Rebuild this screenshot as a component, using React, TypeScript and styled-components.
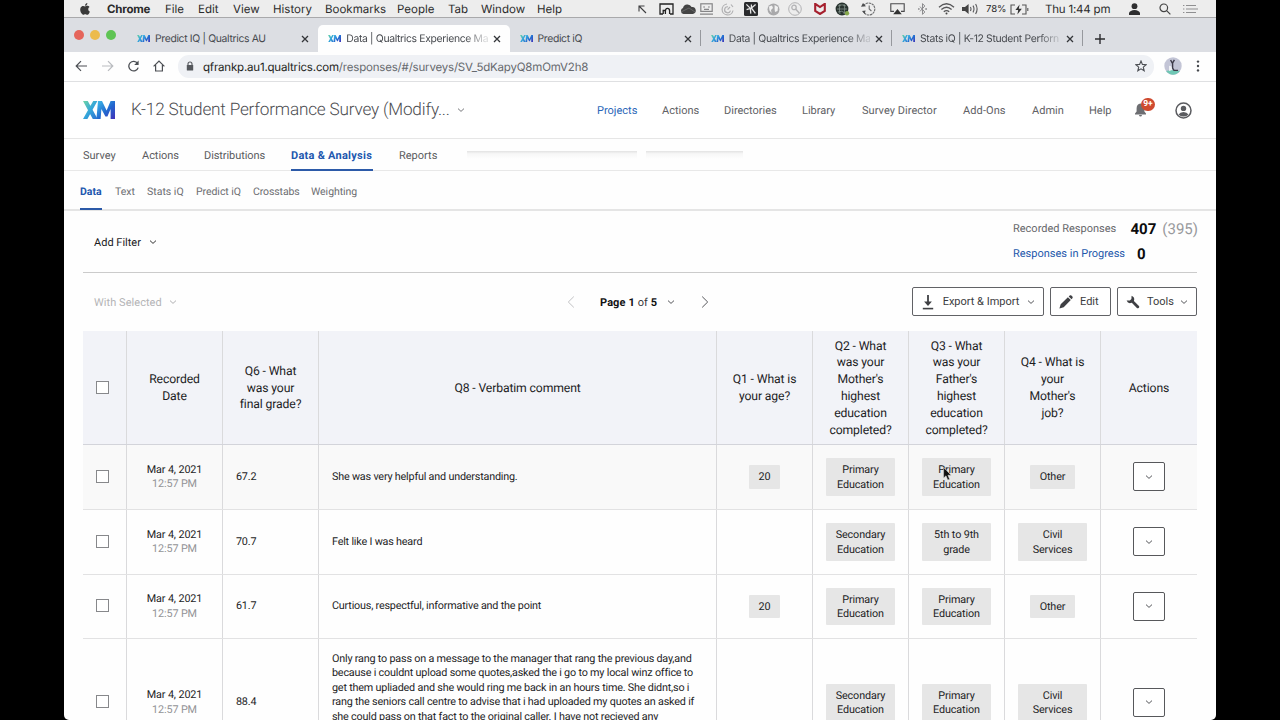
import React from "react";
import styled, { createGlobalStyle, css } from "styled-components";

const Global = createGlobalStyle`
  * { box-sizing: border-box; }
  html, body { margin: 0; padding: 0; background: #000; overflow: hidden; }
  body { font-family: Roboto, "Liberation Sans", sans-serif; text-rendering: geometricPrecision; }
  svg { display: block; flex: none; }
`;

/* ---------- window shell ---------- */

const Desktop = styled.div`
  width: 1280px;
  height: 720px;
  display: flex;
  justify-content: center;
  background: #000;
`;

const Screen = styled.div`
  width: 1152px;
  height: 720px;
  display: flex;
  flex-direction: column;
  overflow: hidden;
  background: #fefefe;
  border-radius: 0 0 5px 5px;
`;

const Label = styled.span<{ $w?: number; $ls?: number }>`
  flex: none;
  white-space: nowrap;
  width: ${(p) => (p.$w ? `${p.$w}px` : "auto")};
  letter-spacing: ${(p) => p.$ls ?? 0}px;
`;

/* ---------- macOS menu bar ---------- */

const MenuBar = styled.header`
  height: 18px;
  flex: none;
  display: flex;
  align-items: center;
  padding: 1px 17px 0 15px;
  background: #ededed;
  border-bottom: 1px solid #a9a9ab;
  font: 11.5px/17px Inter, sans-serif;
  color: #2b2b2b;
`;

const MenuItems = styled.nav`
  display: flex;
  gap: 16px;
  margin-left: 15px;
`;

const MenuItem = styled(Label)<{ $bold?: boolean }>`
  font-weight: ${(p) => (p.$bold ? 700 : 400)};
`;

const Tray = styled.div`
  display: flex;
  align-items: center;
  margin-left: auto;
  height: 17px;
`;

const TraySlot = styled.span<{ $w: number }>`
  width: ${(p) => p.$w}px;
  flex: none;
  display: flex;
  justify-content: center;
`;

const Battery = styled(Label)`
  font-size: 9.6px;
`;

/* ---------- browser tab strip ---------- */

const TabStrip = styled.div`
  height: 34px;
  flex: none;
  display: flex;
  align-items: flex-end;
  background: #dcdee3;
  padding-left: 10px;
`;

const Lights = styled.div`
  display: flex;
  gap: 6px;
  width: 53px;
  height: 34px;
  align-items: center;
`;

const Light = styled.i<{ $c: string }>`
  width: 10px;
  height: 10px;
  border-radius: 50%;
  background: ${(p) => p.$c};
`;

const BrowserTab = styled.div<{ $active?: boolean; $sep?: boolean }>`
  position: relative;
  width: 191.25px;
  height: 27px;
  flex: none;
  display: flex;
  align-items: center;
  padding: 0 9px 0 10px;
  font: 10.4px/14px Inter, sans-serif;
  letter-spacing: -0.34px;
  color: #474a4f;
  ${(p) =>
    p.$active &&
    css`
      background: #fefefe;
      border-radius: 5px 5px 0 0;
    `}
  ${(p) =>
    p.$sep &&
    css`
      &::after {
        content: "";
        position: absolute;
        right: 0;
        top: 5px;
        width: 1px;
        height: 16px;
        background: #96989d;
      }
    `}
`;

const TabTitle = styled.span<{ $fade?: boolean }>`
  flex: 1 0 0;
  min-width: 0;
  margin: 0 5px 0 5px;
  white-space: nowrap;
  ${(p) =>
    p.$fade &&
    css`
      mask-image: linear-gradient(to right, #000 84%, rgba(0, 0, 0, 0.2) 98%);
    `}
`;

const NewTab = styled.div`
  width: 34px;
  height: 27px;
  display: flex;
  align-items: center;
  justify-content: center;
`;

/* ---------- address bar ---------- */

const AddressRow = styled.div`
  height: 30px;
  flex: none;
  display: flex;
  align-items: center;
  border-bottom: 1px solid #dfe0e2;
  padding: 0 11px 1px 11px;
`;

const NavButtons = styled.div`
  display: flex;
  gap: 13px;
  width: 103px;
  align-items: center;
`;

const Address = styled.div`
  width: 976px;
  height: 23px;
  display: flex;
  align-items: center;
  padding: 0 7px 0 8px;
  border-radius: 11px;
  background: #eff1f5;
  font: 11.5px/16px Inter, sans-serif;
  color: #66696e;
`;

const Url = styled.span`
  flex: 1;
  margin-left: 9px;
  padding-top: 1px;
  letter-spacing: -0.19px;
  white-space: nowrap;
  b {
    font-weight: 400;
    color: #1c1d20;
  }
`;

const Avatar = styled.div`
  margin-left: 10px;
`;

const Kebab = styled.div`
  margin-left: auto;
`;

/* ---------- application header ---------- */

const AppHeader = styled.header`
  height: 57px;
  flex: none;
  display: flex;
  align-items: center;
  border-bottom: 1px solid #e6e6e6;
  padding: 0 24px 0 19px;
  background: #fff;
`;

const ProjectTitle = styled.h1`
  margin: 0 7px 1px 16px;
  width: 319px;
  font-size: 17.2px;
  font-weight: 300;
  line-height: 24px;
  color: #4c4d51;
  letter-spacing: -0.2px;
  white-space: nowrap;
`;

const GlobalNav = styled.nav`
  display: flex;
  gap: 26px;
  margin-left: auto;
  padding-top: 1px;
  font-size: 11px;
  line-height: 16px;
  color: #606165;
`;

const GlobalItem = styled(Label)<{ $active?: boolean }>`
  color: ${(p) => (p.$active ? "#2a66b8" : "inherit")};
`;

const Bell = styled.div`
  position: relative;
  width: 14px;
  height: 16px;
  margin: 0 0 0 22px;
`;

const Badge = styled.span`
  position: absolute;
  left: 7px;
  top: -4px;
  width: 14px;
  height: 13px;
  border-radius: 7px;
  background: #cf4a30;
  color: #fff;
  font: 700 8.5px/13px Roboto, sans-serif;
  text-align: center;
`;

const UserIcon = styled.div`
  margin-left: 27px;
`;

/* ---------- section tabs ---------- */

const SectionTabs = styled.nav`
  position: relative;
  height: 32px;
  flex: none;
  display: flex;
  gap: 26px;
  padding-left: 19px;
  border-bottom: 1px solid #e8e8e8;
  font-size: 11px;
  color: #5b5c60;
`;

const SubTabs = styled.nav`
  height: 40px;
  flex: none;
  display: flex;
  gap: 13px;
  padding-left: 16px;
  border-bottom: 2px solid #e5e5e5;
  font-size: 10.5px;
  color: #6c6d71;
`;

const SectionTab = styled(Label)<{ $active?: boolean; $h: number }>`
  height: ${(p) => p.$h}px;
  padding-top: 1px;
  line-height: ${(p) => p.$h}px;
  ${(p) =>
    p.$active &&
    css`
      color: #2257ae;
      font-weight: 700;
      box-shadow: inset 0 -2px 0 #2c5aa8;
    `}
`;

const FloatingShade = styled.i<{ $x: number; $w: number }>`
  position: absolute;
  left: ${(p) => p.$x}px;
  top: 12px;
  width: ${(p) => p.$w}px;
  height: 8px;
  background: linear-gradient(#e2e2e2, #f7f7f7 35%, #fefefe);
`;

/* ---------- data panel ---------- */

const Panel = styled.main`
  flex: 1;
  min-height: 0;
  padding: 0 19px;
  overflow: hidden;
`;

const FilterRow = styled.section`
  height: 62px;
  display: flex;
  justify-content: space-between;
  border-bottom: 1px solid #cbcbcb;
  padding: 0 0 0 11px;
  font-size: 11px;
`;

const Dropdown = styled.div<{ $muted?: boolean }>`
  display: flex;
  align-items: center;
  gap: 7px;
  padding-top: 1px;
  color: ${(p) => (p.$muted ? "#b4b4b6" : "#1b1b1d")};
`;

const Counts = styled.dl`
  margin: 0 -1px 0 0;
  width: 185px;
  padding-top: 5px;
  color: #66676b;
`;

const Count = styled.div`
  height: 25px;
  display: flex;
  align-items: center;
`;

const CountName = styled.dt<{ $link?: boolean }>`
  width: ${(p) => (p.$link ? 124 : 118)}px;
  white-space: nowrap;
  color: ${(p) => (p.$link ? "#2458ab" : "inherit")};
`;

const CountValue = styled.dd`
  margin: 0;
  font-size: 15px;
  font-weight: 700;
  color: #0c0c0d;
  white-space: nowrap;
  small {
    margin-left: 6px;
    font-size: 15px;
    font-weight: 400;
    color: #98999c;
  }
`;

const ToolRow = styled.section`
  height: 58px;
  display: grid;
  grid-template-columns: 488px 1fr auto;
  align-items: center;
  padding: 0 0 1px 11px;
  font-size: 11px;
`;

const Pager = styled.div`
  display: flex;
  align-items: center;
  margin-left: -15px;
  color: #333437;
`;

const PageText = styled(Label)`
  margin: 0 10px 0 25px;
  padding-top: 1px;
  b {
    color: #121214;
  }
`;

const NextPage = styled.span`
  margin-left: 26px;
`;

const Buttons = styled.div`
  display: flex;
  gap: 6px;
`;

const Button = styled.button<{ $w: number }>`
  width: ${(p) => p.$w}px;
  height: 29px;
  display: flex;
  align-items: center;
  padding: 1px 9px 0 8px;
  gap: 7px;
  border: 1px solid #616266;
  border-radius: 2px;
  background: #fff;
  font: 11px/16px Roboto, sans-serif;
  color: #3b3c40;
`;

/* ---------- table ---------- */

const Row = styled.div<{ $h: number; $shade?: string; $line?: string }>`
  display: grid;
  grid-template-columns: 44px 96px 96px 398px 96px 96px 96px 96px 96px;
  height: ${(p) => p.$h}px;
  background: ${(p) => p.$shade ?? "transparent"};
  border-bottom: 1px solid ${(p) => p.$line ?? "#e2e2e3"};
`;

const Cell = styled.div<{ $left?: boolean }>`
  display: flex;
  align-items: center;
  justify-content: ${(p) => (p.$left ? "flex-start" : "center")};
  padding-left: ${(p) => (p.$left ? 13 : 0)}px;
  border-right: 1px solid #dadadc;
  font-size: 10.8px;
  line-height: 14.4px;
  letter-spacing: ${(p) => (p.$left ? -0.2 : -0.12)}px;
  text-align: ${(p) => (p.$left ? "left" : "center")};
  color: #1d1d1f;
  white-space: pre;
  min-width: 0;
  &:last-child {
    border-right: 0;
  }
`;

const HeadCell = styled(Cell)`
  padding-top: 1px;
  font-size: 12.2px;
  line-height: 16.8px;
`;

const LongText = styled.p`
  margin: 0;
  align-self: flex-start;
  padding-top: 13px;
`;

const Checkbox = styled.i`
  width: 13px;
  height: 13px;
  margin: 0 4px 2px 0;
  border: 1px solid #87888b;
  background: #fff;
`;

const Stamp = styled.div`
  time {
    display: block;
  }
  time + time {
    color: #939396;
  }
`;

const Chip = styled.span<{ $wide?: boolean }>`
  padding: ${(p) => (p.$wide ? "5px 0 4px" : "5px 10px 4px")};
  width: ${(p) => (p.$wide ? "69px" : "auto")};
  border-radius: 1px;
  background: #e6e6e6;
`;

const ActionButton = styled.button`
  width: 32px;
  height: 29px;
  margin-bottom: 1px;
  padding: 0;
  display: flex;
  align-items: center;
  justify-content: center;
  border: 1px solid #57585b;
  border-radius: 2px;
  background: #fff;
`;

const Pointer = styled.div`
  position: absolute;
  left: 943px;
  top: 467px;
`;

/* ---------- drawings ---------- */

const Chevron = ({ color = "#55565a", size = 8 }: { color?: string; size?: number }) => (
  <svg width={size} height={size} viewBox="0 0 8 8" fill="none" stroke={color} strokeWidth="1">
    <path d="M1 2.6 L4 5.4 L7 2.6" />
  </svg>
);

const Angle = ({ color, flip }: { color: string; flip?: boolean }) => (
  <svg width="8" height="12" viewBox="0 0 8 12" fill="none" stroke={color} strokeWidth="1">
    <path d={flip ? "M6.8 .6 L1.3 6 L6.8 11.4" : "M1.2 .6 L6.7 6 L1.2 11.4"} />
  </svg>
);

const XmLogo = ({ w, h, id }: { w: number; h: number; id: string }) => (
  <svg width={w} height={h} viewBox="0 0 32 18" fill="none">
    <defs>
      <linearGradient id={`${id}x`} x1="0" y1="0" x2="1" y2="1">
        <stop offset="0" stopColor="#6fd6a4" />
        <stop offset=".5" stopColor="#35a6da" />
        <stop offset="1" stopColor="#2a6fd0" />
      </linearGradient>
      <linearGradient id={`${id}m`} x1="0" y1="0" x2="1" y2="1">
        <stop offset="0" stopColor="#3fc0ea" />
        <stop offset=".55" stopColor="#2268cf" />
        <stop offset="1" stopColor="#4330b8" />
      </linearGradient>
    </defs>
    <path d="M0 0 H4.8 L14.6 18 H9.8z M10.2 0 H14.4 L4.4 18 H0z" fill={`url(#${id}x)`} />
    <path d="M13.4 18 L15 0 H19 L23.6 9.6 L27.6 0 H32 V18 H27.6 V8 L24.4 15.4 H22.4 L18.4 8 L17.6 18z" fill={`url(#${id}m)`} />
  </svg>
);

const Close = () => (
  <svg width="8" height="8" viewBox="0 0 8 8" stroke="#333539" strokeWidth="1.3">
    <path d="M1 1 L7 7 M7 1 L1 7" />
  </svg>
);

const Apple = () => (
  <svg width="13" height="14" viewBox="0 0 24 24" fill="#3a3a3a">
    <path d="M17.05 12.54c-.03-2.76 2.25-4.08 2.36-4.15-1.28-1.88-3.28-2.14-4-2.17-1.7-.17-3.32 1-4.18 1-.86 0-2.2-.98-3.6-.95-1.86.03-3.57 1.08-4.53 2.74-1.93 3.35-.49 8.31 1.39 11.03.92 1.33 2.02 2.83 3.46 2.77 1.39-.05 1.91-.9 3.59-.9 1.68 0 2.15.9 3.62.87 1.49-.03 2.44-1.36 3.35-2.7 1.06-1.54 1.49-3.04 1.52-3.12-.03-.01-2.92-1.12-2.98-4.42zM14.3 4.44c.76-.93 1.28-2.21 1.14-3.49-1.1.04-2.43.73-3.22 1.66-.71.82-1.33 2.13-1.16 3.39 1.23.09 2.48-.62 3.24-1.56z" />
  </svg>
);

const DARK = "#3e3e40";

const TrayIcons = () => (
  <>
    <TraySlot $w={28}>
      <svg width="9" height="9" viewBox="0 0 9 9" fill="none" stroke={DARK} strokeWidth="1.1"><path d="M1 6.5 V1 H6.5 M1 1 L8 8" /></svg>
    </TraySlot>
    <TraySlot $w={20}>
      <svg width="15" height="12" viewBox="0 0 15 12" fill="none" stroke="#222" strokeWidth="1.3"><path d="M4 11 H1 V1 H14 V11 H11 M4.2 11 V7.5 H6.4 V11 M6.4 8 C6.4 4.6 10.4 4.6 10.6 7.6 V11" /></svg>
    </TraySlot>
    <TraySlot $w={24}>
      <svg width="16" height="10" viewBox="0 0 16 10" fill="#444"><path d="M3.5 10 A3.2 3.2 0 0 1 3 3.9 A4.6 4.6 0 0 1 11.6 3 A3.5 3.5 0 0 1 12.8 10z" /><path d="M1 8 L9 4 L15 8" stroke="#777" strokeWidth=".7" fill="none" /></svg>
    </TraySlot>
    <TraySlot $w={12}>
      <svg width="13" height="12" viewBox="0 0 13 12" fill="none" stroke="#858587" strokeWidth="1.2"><rect x=".8" y=".8" width="11.4" height="7.6" /><path d="M0 11.2 H13 M3.2 4 H5 M8 4 H9.8 M4 6.4 H9" /></svg>
    </TraySlot>
    <TraySlot $w={30}>
      <svg width="13" height="13" viewBox="0 0 13 13" fill="none" stroke="#b0b0b2" strokeWidth="1.2"><path d="M6 1 A5.5 5.5 0 1 0 12 7.5 M7 3.8 A3 3 0 1 0 9.5 7.6 M6.6 6.6 L9 4 M10 1.5 L12 4" /></svg>
    </TraySlot>
    <TraySlot $w={18}>
      <svg width="14" height="14" viewBox="0 0 14 14"><rect width="14" height="14" rx="1.5" fill="#2a2b2d" /><path d="M2.4 2.4 L6.4 6.4 M2.6 7.6 L6.4 6.4 L6.8 11.6 M11.6 2.4 L7.4 6 L11.4 11.4 M7.4 2.4 V6" stroke="#e8e8e8" strokeWidth="1.3" fill="none" /></svg>
    </TraySlot>
    <TraySlot $w={26}>
      <svg width="13" height="13" viewBox="0 0 13 13"><circle cx="6.5" cy="6.5" r="6" fill="#a9a9ab" /><path d="M2 3.5 L5 2.6 L6 5 L4 7 L4.6 10 L2.5 7.5z M7.6 2 L11 4 L10.5 8 L8 9 L7.6 6z" fill="#f2f2f2" /></svg>
    </TraySlot>
    <TraySlot $w={18}>
      <svg width="14" height="14" viewBox="0 0 14 14" fill="none" stroke="#b3b3b5" strokeWidth="1"><circle cx="7" cy="7" r="6.3" /><circle cx="6" cy="5.4" r="2.2" strokeWidth="1.3" /><path d="M7.6 7 L11.2 11" strokeWidth="1.5" /></svg>
    </TraySlot>
    <TraySlot $w={32}>
      <svg width="12" height="12" viewBox="0 0 12 12" fill="none" stroke="#a6202e" strokeWidth="2.1"><path d="M1.2 .8 L6 4 L10.8 .8 V8 L6 11 L1.2 8z" /></svg>
    </TraySlot>
    <TraySlot $w={12}>
      <svg width="15" height="14" viewBox="0 0 15 14"><circle cx="7" cy="7" r="6.4" fill="#28332f" /><path d="M3 4 Q7 1.6 11 4 M2 7 H12 M3 10 Q7 8 10 11 M5 2 Q3.6 7 5 12 M9 2 Q10.6 7 9 12" stroke="#9fb0a8" strokeWidth=".6" fill="none" /><circle cx="12" cy="11.3" r="2.2" fill="#86a84c" /></svg>
    </TraySlot>
    <TraySlot $w={40}>
      <svg width="15" height="14" viewBox="0 0 15 14" fill="none" stroke="#6c6d6f" strokeWidth="1.1"><path d="M2.6 4 A6 6 0 1 1 2.4 9.6" strokeDasharray="2.4 .6" /><path d="M8.2 3.5 V7 L10.4 9" /><path d="M0 4.8 L5 4.2 L2 1z M1 9 L4.6 8.4 L3.6 12z" fill="#4c4d4f" stroke="none" /></svg>
    </TraySlot>
    <TraySlot $w={18}>
      <svg width="15" height="12" viewBox="0 0 15 12" fill="none" stroke="#4a4a4c" strokeWidth="1.1"><path d="M4 8.4 H.8 V.8 H14.2 V8.4 H11" /><path d="M7.5 6 L11.8 11.2 H3.2z" fill="#333" stroke="none" /></svg>
    </TraySlot>
    <TraySlot $w={32}>
      <svg width="9" height="12" viewBox="0 0 9 12" fill="none" stroke="#8c8c8e" strokeWidth="1"><path d="M4.5 .6 L6.8 3 L2 8.4 M4.5 .6 V11.4 L6.8 9 L2 3.6" /><path d="M0 6 H1.6 M7.2 6 H9" strokeWidth="1.6" /></svg>
    </TraySlot>
    <TraySlot $w={16}>
      <svg width="17" height="12" viewBox="0 0 17 12" fill="none" stroke="#555557" strokeWidth="1.3"><path d="M1 4.2 Q8.5 -2.6 16 4.2 M3.4 6.6 Q8.5 2 13.6 6.6 M5.8 8.8 Q8.5 6.4 11.2 8.8" /><circle cx="8.5" cy="10.6" r="1" fill="#444" stroke="none" /></svg>
    </TraySlot>
    <TraySlot $w={32}>
      <svg width="17" height="12" viewBox="0 0 17 12" fill="none" stroke="#58585a" strokeWidth="1.1"><path d="M0 4 H3 L6.6 1 V11 L3 8 H0z" fill="#444" stroke="none" /><path d="M8.4 4 Q9.6 6 8.4 8 M11 2.6 Q13 6 11 9.4 M13.6 1 Q16.6 6 13.6 11" /></svg>
    </TraySlot>
  </>
);

const Download = () => (
  <svg width="14" height="16" viewBox="0 0 14 16" stroke="#3f4044" fill="none">
    <path d="M7 1 V10" strokeWidth="1.8" />
    <path d="M3.1 7.6 H10.9 L7 12z" fill="#3f4044" stroke="none" />
    <path d="M1.8 14.6 H12.2" strokeWidth="1.6" />
  </svg>
);

const Pencil = () => (
  <svg width="14" height="14" viewBox="0 0 14 14" fill="#3f4044">
    <path d="M.4 13.6 L1.7 9.3 L8.9 2.2 L11.8 5.1 L4.7 12.3z M9.7 1.4 L11 .3 Q12 -.2 13 .9 Q14 2 13.6 3 L12.5 4.3z" />
  </svg>
);

const Wrench = () => (
  <svg width="14" height="14" viewBox="0 0 14 14" fill="#3f4044">
    <path d="M5.6 .8 A4.1 4.1 0 0 1 7.9 6 L13.2 11.2 Q13.4 12.6 12.6 13.1 Q11.6 13.6 10.9 13 L5.8 7.8 A4 4 0 0 1 .6 5.6 L3.9 5.5 L5.4 4z" />
  </svg>
);

const Lock = () => (
  <svg width="8" height="10" viewBox="0 0 8 10">
    <path d="M2 4.5 V3 A2 2 0 0 1 6 3 V4.5" stroke="#55585d" strokeWidth="1.1" fill="none" />
    <rect x=".8" y="4" width="6.4" height="5.6" rx=".6" fill="#55585d" />
  </svg>
);

/* ---------- data ---------- */

const menu: [string, number, number][] = [
  ["Chrome", 42, -0.2], ["File", 17, 0], ["Edit", 19, 0], ["View", 24, 0], ["History", 36, 0],
  ["Bookmarks", 56, 0], ["People", 35, 0], ["Tab", 17, 0], ["Window", 40, 0], ["Help", 24, 0],
];

const globalNav: [string, number, number][] = [
  ["Projects", 39, 0], ["Actions", 36, 0], ["Directories", 52, 0], ["Library", 34, 0],
  ["Survey Director", 75, 0.05], ["Add-Ons", 43, 0.1], ["Admin", 31, 0], ["Help", 23, 0],
];

const sections: [string, number, number][] = [
  ["Survey", 33, 0], ["Actions", 36, -0.05], ["Distributions", 61, -0.08], ["Data & Analysis", 82, 0.25], ["Reports", 39, 0],
];

const subs: [string, number, number][] = [
  ["Data", 22, 0], ["Text", 19, 0], ["Stats iQ", 36, 0], ["Predict iQ", 44, -0.05], ["Crosstabs", 45, -0.1], ["Weighting", 46, -0.05],
];

const heads = [
  "Recorded\nDate",
  "Q6 - What\nwas your\nfinal grade?",
  "Q8 - Verbatim comment",
  "Q1 - What is\nyour age?",
  "Q2 - What\nwas your\nMother's\nhighest\neducation\ncompleted?",
  "Q3 - What\nwas your\nFather's\nhighest\neducation\ncompleted?",
  "Q4 - What is\nyour\nMother's\njob?",
  "Actions",
];

interface Response {
  grade: string;
  comment: string;
  age?: string;
  mother: string;
  father: string;
  job: string;
  height: number;
  shade?: string;
}

const longComment = [
  "Only rang to pass on a message to the manager that rang the previous day,and",
  "because i couldnt upload some quotes,asked the i go to my local winz office to",
  "get them upliaded and she would ring me back in an hours time. She didnt,so i",
  "rang the seniors call centre to advise that i had uploaded my quotes an asked if",
  "she could pass on that fact to the original caller. I have not recieved any",
].join("\n");

const responses: Response[] = [
  { grade: "67.2", comment: "She was very helpful and understanding.", age: "20", mother: "Primary\nEducation", father: "Primary\nEducation", job: "Other", height: 65, shade: "#f9f9f9" },
  { grade: "70.7", comment: "Felt like I was heard", mother: "Secondary\nEducation", father: "5th to 9th\ngrade", job: "Civil\nServices", height: 65 },
  { grade: "61.7", comment: "Curtious, respectful, informative and the point", age: "20", mother: "Primary\nEducation", father: "Primary\nEducation", job: "Other", height: 64 },
  { grade: "88.4", comment: longComment, mother: "Secondary\nEducation", father: "Primary\nEducation", job: "Civil\nServices", height: 128 },
];

const Answer = ({ text }: { text: string }) => <Chip $wide={text.includes("\n")}>{text}</Chip>;

export default function App() {
  return (
    <Desktop>
      <Global />
      <Screen>
        <MenuBar>
          <Apple />
          <MenuItems>
            {menu.map(([t, w, ls], i) => (
              <MenuItem key={t} $w={w} $ls={ls} $bold={i === 0}>{t}</MenuItem>
            ))}
          </MenuItems>
          <Tray>
            <TrayIcons />
            <Battery $w={24} $ls={-0.1}>78%</Battery>
            <svg width="19" height="11" viewBox="0 0 19 11" fill="none" stroke="#555" strokeWidth="1.1">
              <path d="M5 1 H1 V10 H5 M12 1 H16 V10 H12 M17.8 4 V7" />
              <path d="M9.6 .6 L5.4 6 H8.2 L7.4 10.4 L11.8 4.8 H8.8z" fill="#333" stroke="none" />
            </svg>
            <TraySlot $w={16} />
            <Label $w={74} $ls={-0.2}>Thu 1:44 pm</Label>
            <TraySlot $w={30}>
              <svg width="11" height="12" viewBox="0 0 11 12" fill="#2e2e30"><circle cx="5.5" cy="3.2" r="2.9" /><path d="M0 12 V10 Q1 7.4 5.5 7 Q10 7.4 11 10 V12z" /></svg>
            </TraySlot>
            <TraySlot $w={32}>
              <svg width="12" height="12" viewBox="0 0 12 12" fill="none" stroke="#444" strokeWidth="1.2"><circle cx="4.8" cy="4.8" r="3.8" /><path d="M7.6 7.6 L11.4 11.4" /></svg>
            </TraySlot>
            <TraySlot $w={18}>
              <svg width="15" height="10" viewBox="0 0 15 10" stroke="#8f8f91" strokeWidth="1"><path d="M3 1.5 H13 M3 5 H15 M3 8.5 H13 M0 1.5 H1.4 M0 5 H1.4 M0 8.5 H1.4" /></svg>
            </TraySlot>
          </Tray>
        </MenuBar>

        <TabStrip>
          <Lights>
            <Light $c="#e5655b" />
            <Light $c="#ecbb4d" />
            <Light $c="#5fc454" />
          </Lights>
          <BrowserTab>
            <XmLogo w={13} h={7.5} id="a" />
            <TabTitle>Predict IQ | Qualtrics AU</TabTitle>
            <Close />
          </BrowserTab>
          <BrowserTab $active>
            <XmLogo w={13} h={7.5} id="b" />
            <TabTitle $fade>Data | Qualtrics Experience Ma</TabTitle>
            <Close />
          </BrowserTab>
          <BrowserTab $sep>
            <XmLogo w={13} h={7.5} id="c" />
            <TabTitle>Predict iQ</TabTitle>
            <Close />
          </BrowserTab>
          <BrowserTab $sep>
            <XmLogo w={13} h={7.5} id="d" />
            <TabTitle $fade>Data | Qualtrics Experience Ma</TabTitle>
            <Close />
          </BrowserTab>
          <BrowserTab $sep>
            <XmLogo w={13} h={7.5} id="e" />
            <TabTitle $fade>Stats iQ | K-12 Student Perforn</TabTitle>
            <Close />
          </BrowserTab>
          <NewTab>
            <svg width="10" height="10" viewBox="0 0 10 10" stroke="#2b2c2f" strokeWidth="1.4"><path d="M5 0 V10 M0 5 H10" /></svg>
          </NewTab>
        </TabStrip>

        <AddressRow>
          <NavButtons>
            <svg width="13" height="12" viewBox="0 0 13 12" fill="none" stroke="#4c4f54" strokeWidth="1.2"><path d="M12 6 H1.6 M6 1.2 L1.2 6 L6 10.8" /></svg>
            <svg width="13" height="12" viewBox="0 0 13 12" fill="none" stroke="#b9bbbf" strokeWidth="1.2"><path d="M1 6 H11.4 M7 1.2 L11.8 6 L7 10.8" /></svg>
            <svg width="13" height="12" viewBox="0 0 13 12" fill="none" stroke="#4c4f54" strokeWidth="1.3"><path d="M10.6 3.4 A4.8 4.8 0 1 0 11.2 7.6" /><path d="M11.6 .6 V5 H7.2z" fill="#4c4f54" stroke="none" /></svg>
            <svg width="12" height="12" viewBox="0 0 12 12" fill="none" stroke="#4c4f54" strokeWidth="1.2"><path d="M.6 6.4 L6 1 L11.4 6.4 M2.6 5 V11 H9.4 V5" /></svg>
          </NavButtons>
          <Address>
            <Lock />
            <Url><b>qfrankp.au1.qualtrics.com</b>/responses/#/surveys/SV_5dKapyQ8mOmV2h8</Url>
            <svg width="12" height="12" viewBox="0 0 12 12" fill="none" stroke="#4c4f54" strokeWidth="1.1"><path d="M6 1 L7.4 4.4 L11.2 4.7 L8.3 7.1 L9.2 10.8 L6 8.8 L2.8 10.8 L3.7 7.1 L.8 4.7 L4.6 4.4z" /></svg>
          </Address>
          <Avatar>
            <svg width="18" height="18" viewBox="0 0 18 18">
              <circle cx="9" cy="9" r="8.7" fill="#c3c5d6" />
              <path d="M2 14 Q9 12 16 14 Q13 17.7 9 17.7 Q5 17.7 2 14z" fill="#6fc7b4" />
              <path d="M6.6 3 L8.4 6.4 L10.4 2.8 M8.6 6 V11 L10 13.4 H14" stroke="#3c3a48" strokeWidth="1.4" fill="none" />
              <path d="M5 9 Q8 8 8 13 L5 14z" fill="#eef0f4" />
            </svg>
          </Avatar>
          <Kebab>
            <svg width="14" height="12" viewBox="0 0 14 12" fill="#45484d"><circle cx="7" cy="1.6" r="1.2" /><circle cx="7" cy="6" r="1.2" /><circle cx="7" cy="10.4" r="1.2" /></svg>
          </Kebab>
        </AddressRow>

        <AppHeader>
          <XmLogo w={32} h={18} id="brand" />
          <ProjectTitle>K-12 Student Performance Survey (Modify...</ProjectTitle>
          <Chevron color="#77787c" />
          <GlobalNav>
            {globalNav.map(([t, w, ls], i) => (
              <GlobalItem key={t} $w={w} $ls={ls} $active={i === 0}>{t}</GlobalItem>
            ))}
          </GlobalNav>
          <Bell>
            <svg width="13" height="15" viewBox="0 0 13 15" fill="#6d6e72"><path d="M6.5 1.5 Q10.4 2 10.4 6.5 V9.4 L12 11.6 V12.4 H1 V11.6 L2.6 9.4 V6.5 Q2.6 2 6.5 1.5z M5 13 H8 Q7.8 14.6 6.5 14.6 Q5.2 14.6 5 13z" /></svg>
            <Badge>9+</Badge>
          </Bell>
          <UserIcon>
            <svg width="17" height="17" viewBox="0 0 17 17"><circle cx="8.5" cy="8.5" r="7.5" fill="none" stroke="#5b5c60" strokeWidth="1.5" /><circle cx="8.5" cy="6.4" r="2.7" fill="#5b5c60" /><path d="M3.6 12.4 Q5 9.9 8.5 9.9 Q12 9.9 13.4 12.4 Q11.4 14.6 8.5 14.6 Q5.6 14.6 3.6 12.4z" fill="#5b5c60" /></svg>
          </UserIcon>
        </AppHeader>

        <SectionTabs>
          {sections.map(([t, w, ls], i) => (
            <SectionTab key={t} $w={w} $ls={ls} $h={32} $active={i === 3}>{t}</SectionTab>
          ))}
          <FloatingShade $x={403} $w={170} />
          <FloatingShade $x={582} $w={97} />
        </SectionTabs>

        <SubTabs>
          {subs.map(([t, w, ls], i) => (
            <SectionTab key={t} $w={w} $ls={ls} $h={39} $active={i === 0}>{t}</SectionTab>
          ))}
        </SubTabs>

        <Panel>
          <FilterRow>
            <Dropdown>
              <Label $w={48}>Add Filter</Label>
              <Chevron color="#333" />
            </Dropdown>
            <Counts>
              <Count>
                <CountName>Recorded Responses</CountName>
                <CountValue>407<small>(395)</small></CountValue>
              </Count>
              <Count>
                <CountName $link>Responses in Progress</CountName>
                <CountValue>0</CountValue>
              </Count>
            </Counts>
          </FilterRow>

          <ToolRow>
            <Dropdown $muted>
              <Label $w={68} $ls={0.05}>With Selected</Label>
              <Chevron color="#b0b0b2" />
            </Dropdown>
            <Pager>
              <Angle color="#c0c1c3" flip />
              <PageText $w={57} $ls={0.1}><b>Page 1</b> of <b>5</b></PageText>
              <Chevron />
              <NextPage><Angle color="#55565a" /></NextPage>
            </Pager>
            <Buttons>
              <Button $w={132}><Download /><Label $w={78}>Export &amp; Import</Label><Chevron /></Button>
              <Button $w={61}><Pencil />Edit</Button>
              <Button $w={80}><Wrench /><Label $w={26}>Tools</Label><Chevron /></Button>
            </Buttons>
          </ToolRow>

          <Row $h={114} $shade="#f2f3f8" $line="#d3d4da">
            <HeadCell><Checkbox /></HeadCell>
            {heads.map((h) => <HeadCell key={h}>{h}</HeadCell>)}
          </Row>
          {responses.map((r) => (
            <Row key={r.grade} $h={r.height} $shade={r.shade}>
              <Cell><Checkbox /></Cell>
              <Cell><Stamp><time>Mar 4, 2021</time><time>12:57 PM</time></Stamp></Cell>
              <Cell $left>{r.grade}</Cell>
              <Cell $left>{r.comment.includes("\n") ? <LongText>{r.comment}</LongText> : r.comment}</Cell>
              <Cell>{r.age && <Answer text={r.age} />}</Cell>
              <Cell><Answer text={r.mother} /></Cell>
              <Cell><Answer text={r.father} /></Cell>
              <Cell><Answer text={r.job} /></Cell>
              <Cell><ActionButton><Chevron /></ActionButton></Cell>
            </Row>
          ))}
        </Panel>
      </Screen>
      <Pointer>
        <svg width="9" height="14" viewBox="0 0 9 14"><path d="M.6 .6 V11 L3 8.8 L4.8 13 L6.6 12.2 L4.9 8.2 H8.2z" fill="#111" stroke="#ddd" strokeWidth=".5" /></svg>
      </Pointer>
    </Desktop>
  );
}
